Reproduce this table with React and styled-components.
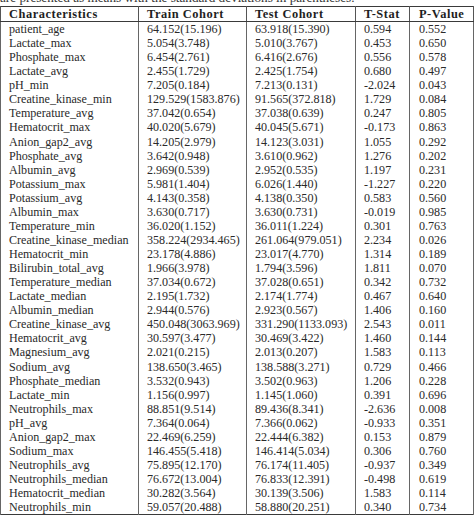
import React from "react";
import styled, { createGlobalStyle } from "styled-components";

const Global = createGlobalStyle`
  html, body { margin: 0; padding: 0; background: #fff; overflow: hidden; }
  body { font-family: "Liberation Serif", "Times New Roman", serif; color: #222; }
`;

const Page = styled.div`
  width: 474px;
  height: 516px;
  overflow: hidden;
`;

const CaptionClip = styled.div`
  height: 6px;
  overflow: hidden;
`;

const CaptionText = styled.p`
  margin: -9px 0 0 0;
  font-size: 13.2px;
  line-height: 13px;
  white-space: nowrap;
  color: #333;
`;

const Table = styled.table`
  width: 473px;
  table-layout: fixed;
  border-collapse: collapse;
  border-top: 1px solid #3a3a3a;
  border-bottom: 1px solid #3a3a3a;
`;

const HeadCell = styled.th`
  height: 14px;
  padding: 0 0 0 ${(p) => p.$pad || 8}px;
  text-align: left;
  font-weight: bold;
  font-size: 12.4px;
  letter-spacing: 0.55px;
  line-height: 14px;
  border-left: 1px solid #555;
  border-right: 1px solid #555;
  border-bottom: 1px solid #3a3a3a;
  white-space: nowrap;
  overflow: hidden;
  color: #1e1e1e;
`;

const Row = styled.tr`
  height: 14.06px;
`;

const Cell = styled.td`
  padding: 0 0 0 ${(p) => p.$pad || 8}px;
  font-size: 12.1px;
  line-height: 14.06px;
  height: 14.06px;
  border-left: 1px solid #666;
  border-right: 1px solid #666;
  white-space: nowrap;
  overflow: hidden;
  color: #2a2a2a;
`;

const rows = [
  ["patient_age", "64.152(15.196)", "63.918(15.390)", "0.594", "0.552"],
  ["Lactate_max", "5.054(3.748)", "5.010(3.767)", "0.453", "0.650"],
  ["Phosphate_max", "6.454(2.761)", "6.416(2.676)", "0.556", "0.578"],
  ["Lactate_avg", "2.455(1.729)", "2.425(1.754)", "0.680", "0.497"],
  ["pH_min", "7.205(0.184)", "7.213(0.131)", "-2.024", "0.043"],
  ["Creatine_kinase_min", "129.529(1583.876)", "91.565(372.818)", "1.729", "0.084"],
  ["Temperature_avg", "37.042(0.654)", "37.038(0.639)", "0.247", "0.805"],
  ["Hematocrit_max", "40.020(5.679)", "40.045(5.671)", "-0.173", "0.863"],
  ["Anion_gap2_avg", "14.205(2.979)", "14.123(3.031)", "1.055", "0.292"],
  ["Phosphate_avg", "3.642(0.948)", "3.610(0.962)", "1.276", "0.202"],
  ["Albumin_avg", "2.969(0.539)", "2.952(0.535)", "1.197", "0.231"],
  ["Potassium_max", "5.981(1.404)", "6.026(1.440)", "-1.227", "0.220"],
  ["Potassium_avg", "4.143(0.358)", "4.138(0.350)", "0.583", "0.560"],
  ["Albumin_max", "3.630(0.717)", "3.630(0.731)", "-0.019", "0.985"],
  ["Temperature_min", "36.020(1.152)", "36.011(1.224)", "0.301", "0.763"],
  ["Creatine_kinase_median", "358.224(2934.465)", "261.064(979.051)", "2.234", "0.026"],
  ["Hematocrit_min", "23.178(4.886)", "23.017(4.770)", "1.314", "0.189"],
  ["Bilirubin_total_avg", "1.966(3.978)", "1.794(3.596)", "1.811", "0.070"],
  ["Temperature_median", "37.034(0.672)", "37.028(0.651)", "0.342", "0.732"],
  ["Lactate_median", "2.195(1.732)", "2.174(1.774)", "0.467", "0.640"],
  ["Albumin_median", "2.944(0.576)", "2.923(0.567)", "1.406", "0.160"],
  ["Creatine_kinase_avg", "450.048(3063.969)", "331.290(1133.093)", "2.543", "0.011"],
  ["Hematocrit_avg", "30.597(3.477)", "30.469(3.422)", "1.460", "0.144"],
  ["Magnesium_avg", "2.021(0.215)", "2.013(0.207)", "1.583", "0.113"],
  ["Sodium_avg", "138.650(3.465)", "138.588(3.271)", "0.729", "0.466"],
  ["Phosphate_median", "3.532(0.943)", "3.502(0.963)", "1.206", "0.228"],
  ["Lactate_min", "1.156(0.997)", "1.145(1.060)", "0.391", "0.696"],
  ["Neutrophils_max", "88.851(9.514)", "89.436(8.341)", "-2.636", "0.008"],
  ["pH_avg", "7.364(0.064)", "7.366(0.062)", "-0.933", "0.351"],
  ["Anion_gap2_max", "22.469(6.259)", "22.444(6.382)", "0.153", "0.879"],
  ["Sodium_max", "146.455(5.418)", "146.414(5.034)", "0.306", "0.760"],
  ["Neutrophils_avg", "75.895(12.170)", "76.174(11.405)", "-0.937", "0.349"],
  ["Neutrophils_median", "76.672(13.004)", "76.833(12.391)", "-0.498", "0.619"],
  ["Hematocrit_median", "30.282(3.564)", "30.139(3.506)", "1.583", "0.114"],
  ["Neutrophils_min", "59.057(20.488)", "58.880(20.251)", "0.340", "0.734"],
];

const widths = [138, 108, 109, 54, 64];
const pads = [8, 8, 8, 8, 9];
const headers = ["Characteristics", "Train Cohort", "Test Cohort", "T-Stat", "P-Value"];

export default function App() {
  return (
    <Page>
      <Global />
      <CaptionClip>
        <CaptionText>
          are presented as means with the standard deviations in parentheses.
        </CaptionText>
      </CaptionClip>
      <Table>
        <colgroup>
          {widths.map((w, i) => (
            <col key={i} style={{ width: w }} />
          ))}
        </colgroup>
        <thead>
          <tr>
            {headers.map((h, i) => (
              <HeadCell key={h} $pad={pads[i]}>
                {h}
              </HeadCell>
            ))}
          </tr>
        </thead>
        <tbody>
          {rows.map((r) => (
            <Row key={r[0]}>
              {r.map((v, i) => (
                <Cell key={i} $pad={pads[i]}>
                  {v}
                </Cell>
              ))}
            </Row>
          ))}
        </tbody>
      </Table>
    </Page>
  );
}
